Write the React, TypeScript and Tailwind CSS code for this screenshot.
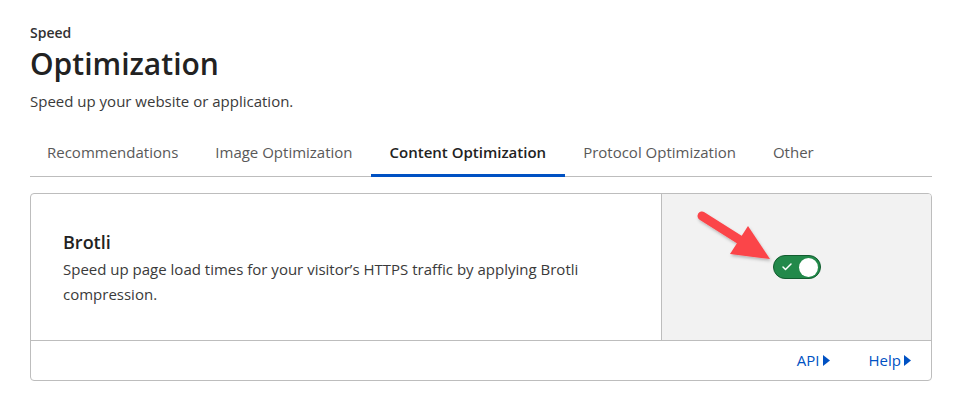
import { Check } from 'lucide-react';

const tabs = ['Recommendations', 'Image Optimization', 'Content Optimization', 'Protocol Optimization', 'Other'];

function Arrow() {
  return (
    <svg className="absolute left-[28px] top-[10px]" width="90" height="70" viewBox="0 0 90 70">
      <defs>
        <filter id="sh" x="-20%" y="-20%" width="140%" height="140%">
          <feDropShadow dx="1" dy="2" stdDeviation="1.5" floodColor="#000" floodOpacity="0.25" />
        </filter>
      </defs>
      <g filter="url(#sh)">
        <line x1="12" y1="12" x2="50" y2="36" stroke="#fb4549" strokeWidth="9" strokeLinecap="round" />
        <polygon points="58,22 80,55 40,50" fill="#fb4549" />
      </g>
    </svg>
  );
}

export default function App() {
  return (
    <div className="w-[970px] h-[396px] bg-white px-[30px] pt-[24px] text-[#313131]" style={{ fontFamily: '"Open Sans", "Noto Sans", sans-serif' }}>
      <p className="text-[14px] font-semibold leading-[18px]">Speed</p>
      <h1 className="text-[30px] font-semibold leading-[40px] mt-[2px] text-[#222]">Optimization</h1>
      <p className="text-[15px] leading-[20px] mt-[7px] text-[#3a3a3a]">Speed up your website or application.</p>

      <div className="mt-[20px] flex border-b border-[#bdbdbd] w-[902px]">
        <div className="flex -ml-[1.5px]">
          {tabs.map((t) => {
            const active = t === 'Content Optimization';
            return (
              <div
                key={t}
                className={
                  active
                    ? 'px-[18.5px] pt-[11px] pb-[12px] text-[15px] leading-[20px] font-semibold text-[#222] border-b-[3px] border-[#0051c3] -mb-[1px]'
                    : 'px-[18.5px] pt-[11px] pb-[14px] text-[15px] leading-[20px] text-[#595959]'
                }
              >
                {t}
              </div>
            );
          })}
        </div>
      </div>

      <div className="mt-[16px] w-[902px] border border-[#bdbdbd] rounded-[4px] overflow-hidden">
        <div className="flex h-[146px]">
          <div className="flex-1 min-w-0 pl-[32px] pr-[40px] pt-[36px]">
            <h2 className="text-[18px] font-semibold leading-[24px] text-[#222]">Brotli</h2>
            <p className="mt-[3px] text-[15px] leading-[25px] text-[#3a3a3a]">
              Speed up page load times for your visitor’s HTTPS traffic by applying Brotli compression.
            </p>
          </div>
          <div className="relative w-[270px] shrink-0 bg-[#f2f2f2] border-l border-[#bdbdbd]">
            <Arrow />
            <div className="absolute left-[111px] top-[61px] w-[48px] h-[24px] rounded-full bg-[#22894a] border border-[#125c2f] flex items-center justify-between pl-[7px] pr-[2px]">
              <Check className="w-[12px] h-[12px] text-white" strokeWidth={3} />
              <div className="w-[19px] h-[19px] rounded-full bg-white" />
            </div>
          </div>
        </div>
        <div className="h-[40px] border-t border-[#bdbdbd] flex items-center justify-end gap-[39px] pr-[20px] text-[15px] text-[#0051c3]">
          <span className="flex items-center gap-[3px]">
            API
            <svg width="7" height="11" viewBox="0 0 7 11"><polygon points="0,0 7,5.5 0,11" fill="#0051c3" /></svg>
          </span>
          <span className="flex items-center gap-[3px]">
            Help
            <svg width="7" height="11" viewBox="0 0 7 11"><polygon points="0,0 7,5.5 0,11" fill="#0051c3" /></svg>
          </span>
        </div>
      </div>
    </div>
  );
}
